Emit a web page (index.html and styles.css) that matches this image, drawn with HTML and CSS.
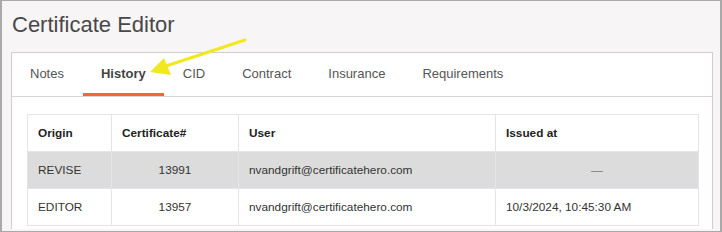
FILE: index.html
```html
<!DOCTYPE html>
<html lang="en">
<head>
    <meta charset="UTF-8">
    <title>Certificate Editor</title>
    <link rel="stylesheet" href="styles.css">
</head>
<body>
    <div class="frame">
        <h1 class="page-title">Certificate Editor</h1>

        <div class="card">
            <!-- Tabs -->
            <div class="tabs">
                <div class="tab">Notes</div>
                <div class="tab active">History</div>
                <div class="tab">CID</div>
                <div class="tab">Contract</div>
                <div class="tab">Insurance</div>
                <div class="tab">Requirements</div>
            </div>

            <div class="tab-body">
                <table class="history-table">
                    <thead>
                        <tr>
                            <th class="col-origin">Origin</th>
                            <th class="col-cert">Certificate#</th>
                            <th class="col-user">User</th>
                            <th class="col-issued">Issued at</th>
                        </tr>
                    </thead>
                    <tbody>
                        <tr class="highlight">
                            <td>REVISE</td>
                            <td class="center">13991</td>
                            <td>nvandgrift@certificatehero.com</td>
                            <td class="center dash">—</td>
                        </tr>
                        <tr>
                            <td>EDITOR</td>
                            <td class="center">13957</td>
                            <td>nvandgrift@certificatehero.com</td>
                            <td>10/3/2024, 10:45:30 AM</td>
                        </tr>
                    </tbody>
                </table>
            </div>
        </div>

        <!-- annotation arrow -->
        <svg class="arrow" width="110" height="50" viewBox="140 30 110 50">
            <line x1="247" y1="41" x2="168" y2="67" stroke="#f2e820" stroke-width="3" stroke-linecap="round"/>
            <polygon points="152,73 166,59 173,76" fill="#f2e820"/>
        </svg>
    </div>
</body>
</html>
```

FILE: styles.css
```css
/* General */
body {
    margin: 0;
    padding: 0;
    font-family: "Liberation Sans", Arial, sans-serif;
}

.frame {
    position: relative;
    width: 722px;
    height: 232px;
    box-sizing: border-box;
    border: 1px solid #a9a9a9;
    border-left-width: 2px;
    border-right-width: 2px;
    background-color: #f7f5f6;
    display: flex;
    flex-direction: column;
    overflow: hidden;
}

.page-title {
    margin: 0;
    padding: 11px 0 0 10px;
    height: 40px;
    box-sizing: border-box;
    font-size: 22px;
    font-weight: normal;
    color: #484848;
}

/* Card */
.card {
    flex: 1;
    margin: 11px 7px 2px 9px;
    background-color: #fff;
    border: 1px solid #cfcfcf;
    border-bottom: none;
}

.tabs {
    display: flex;
    height: 43px;
    padding-left: 0;
    border-bottom: 1px solid #d6d6d6;
}

.tab {
    padding: 0 18px;
    margin-right: 1px;
    line-height: 41px;
    font-size: 13px;
    color: #555;
    border-bottom: 3px solid transparent;
}

.tab.active {
    font-weight: bold;
    color: #444;
    border-bottom-color: #f26a25;
}

.tab-body {
    padding: 17px 13px 0 15px;
}

/* Table */
.history-table {
    width: 672px;
    border-collapse: collapse;
    font-size: 11.8px;
    color: #333;
}

.history-table th,
.history-table td {
    border: 1px solid #e4e4ea;
    padding: 0 10px;
    text-align: left;
}

.history-table th {
    height: 36px;
    font-weight: bold;
    color: #222;
}

.history-table td {
    height: 36px;
}

.history-table .center {
    text-align: center;
}

.history-table .dash {
    color: #777;
}

.history-table tr.highlight td {
    background-color: #dcdcdc;
}

.col-origin { width: 63px; }
.col-cert { width: 106px; }
.col-user { width: 236px; }

/* Arrow overlay */
.arrow {
    position: absolute;
    left: 136px;
    top: 28px;
}
```
